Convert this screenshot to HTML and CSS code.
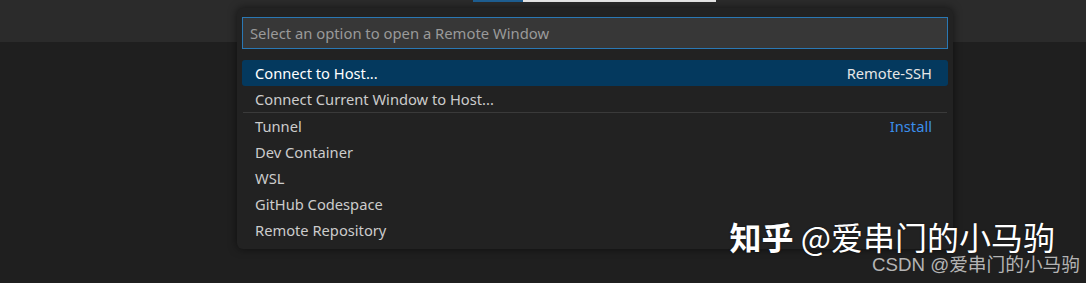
FILE: index.html
```html
<!DOCTYPE html>
<html lang="en">
<head>
    <meta charset="UTF-8">
    <meta name="viewport" content="width=device-width, initial-scale=1.0">
    <title>Remote Window</title>
    <link rel="stylesheet" href="styles.css">
</head>
<body>

    <div class="workbench">
        <!-- Title area with a cut-off tab strip -->
        <div class="titlebar">
            <span class="strip-blue"></span>
            <span class="strip-white"></span>
        </div>
        <div class="editor"></div>

        <!-- Quick pick -->
        <div class="quick-pick">
            <div class="qp-input">Select an option to open a Remote Window</div>
            <div class="qp-list">
                <div class="qp-row active">
                    <span>Connect to Host...</span>
                    <span class="qp-detail">Remote-SSH</span>
                </div>
                <div class="qp-row">
                    <span>Connect Current Window to Host...</span>
                </div>
                <div class="qp-sep"></div>
                <div class="qp-row">
                    <span>Tunnel</span>
                    <span class="qp-link">Install</span>
                </div>
                <div class="qp-row"><span>Dev Container</span></div>
                <div class="qp-row"><span>WSL</span></div>
                <div class="qp-row"><span>GitHub Codespace</span></div>
                <div class="qp-row"><span>Remote Repository</span></div>
            </div>
        </div>

        <!-- Watermarks -->
        <div class="watermark">
            <div class="wm-big"><b>知乎</b> @爱串门的小马驹</div>
            <div class="wm-small">CSDN @爱串门的小马驹</div>
        </div>
    </div>

</body>
</html>
```

FILE: styles.css
```css
body {
    margin: 0;
    padding: 0;
    background-color: #1f1f1f;
    font-family: "Noto Sans", "Open Sans", sans-serif;
    overflow: hidden;
}

.workbench {
    position: relative;
    width: 1086px;
    height: 283px;
}

.titlebar {
    height: 42px;
    background-color: #2b2b2b;
    display: flex;
    align-items: flex-start;
    padding-left: 473px;
}

.strip-blue {
    width: 50px;
    height: 2px;
    background-color: #1e5f93;
}

.strip-white {
    width: 193px;
    height: 2px;
    background-color: #e8e8e8;
}

.editor {
    height: 241px;
    background-color: #1f1f1f;
}

/* Quick pick */
.quick-pick {
    position: absolute;
    left: 237px;
    top: 8px;
    width: 706px;
    padding: 9px 5px 6px 5px;
    background-color: #222222;
    border-radius: 6px;
    box-shadow: 0 0 8px rgba(0, 0, 0, 0.55);
}

.qp-input {
    height: 30px;
    line-height: 30px;
    padding: 0 7px;
    background-color: #373737;
    border: 1px solid #2a78b4;
    color: #9a9a9a;
    font-size: 14.8px;
}

.qp-list {
    margin-top: 11px;
}

.qp-row {
    display: flex;
    justify-content: space-between;
    align-items: center;
    height: 26px;
    padding: 0 16px 0 13px;
    color: #cccccc;
    font-size: 14.7px;
    border-radius: 3px;
}

.qp-row.active {
    background-color: #04395e;
    color: #ffffff;
}

.qp-detail {
    color: #e6e6e6;
}

.qp-link {
    color: #3b8eea;
}

.qp-sep {
    height: 1px;
    margin: 0 1px;
    background-color: #3a3a3a;
}

/* Watermark overlay */
.watermark {
    position: absolute;
    right: 6px;
    top: 218px;
    display: flex;
    flex-direction: column;
    align-items: flex-end;
    font-family: "Noto Sans CJK SC", sans-serif;
}

.wm-big {
    margin-right: 25px;
    font-size: 32px;
    line-height: 36px;
    color: #ffffff;
    text-shadow: 0 0 2px rgba(0, 0, 0, 0.6);
}

.wm-small {
    font-family: "Liberation Sans", "Noto Sans CJK SC", sans-serif;
    font-size: 18.7px;
    line-height: 22px;
    color: #b4b4b4;
}
```
